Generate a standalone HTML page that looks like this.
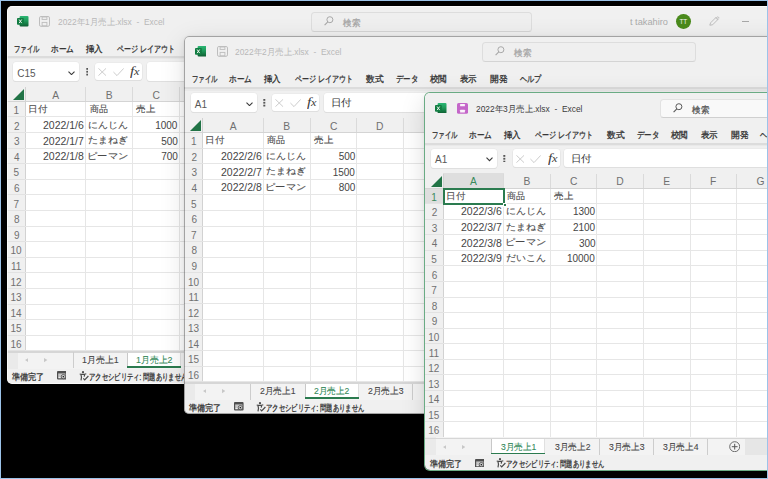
<!DOCTYPE html>
<html><head><meta charset="utf-8"><style>
*{margin:0;padding:0}
html,body{width:768px;height:479px;overflow:hidden;background:#000;font-family:"Liberation Sans",sans-serif}
.frame{position:absolute;left:0;top:0;width:768px;height:479px;overflow:hidden;background:#000}
.fb{position:absolute;left:0;top:0;width:768px;height:479px;box-shadow:inset 0 0 0 1px #9cc3e9;z-index:10}
.abs{position:absolute}
.t{position:absolute;white-space:nowrap;transform-origin:0 0;line-height:normal}
.win{position:absolute;background:#f0f0f0;border-radius:5px;overflow:hidden}
.win::after{content:"";position:absolute;left:0;top:0;right:0;bottom:0;border-radius:5px;box-shadow:inset 0 0 0 1px rgba(255,255,255,0.7);pointer-events:none}
.win.active::after{box-shadow:none}
.sh.active{box-shadow:0 0 0 1px #6aab84,0 2px 6px rgba(0,0,0,0.08),0 6px 26px rgba(0,0,0,0.14)}
.sh{position:absolute;border-radius:5px;box-shadow:0 0 1px rgba(0,0,0,0.15),0 2px 6px rgba(0,0,0,0.07),0 6px 26px rgba(0,0,0,0.12)}
.win.dark::after{box-shadow:inset 0 0 0 1px rgba(0,0,0,0.32)}
</style></head><body>
<div class="frame">
<div class="sh" style="left:184.3px;top:36.1px;width:830px;height:377.5px"></div>
<div class="win" style="left:6.8px;top:6px;width:830px;height:377.5px">
<svg class="abs" style="left:10.6px;top:10.2px" width="11.5" height="10.5" viewBox="0 0 11.5 10.5">
<defs><linearGradient id="xgw1" x1="0" y1="0" x2="0" y2="1"><stop offset="0" stop-color="#2bb673"/><stop offset="0.45" stop-color="#1e9a5a"/><stop offset="1" stop-color="#0f5e33"/></linearGradient></defs>
<rect x="2.6" y="0" width="8.9" height="10.5" rx="1.1" fill="url(#xgw1)"/>
<rect x="0" y="1.9" width="6.8" height="6.8" rx="0.9" fill="#107c41"/>
<path d="M2.1 3.5 L4.7 7.1 M4.7 3.5 L2.1 7.1" stroke="#e8f5ec" stroke-width="1"/>
</svg>
<svg class="abs" style="left:32.5px;top:10.3px" width="11" height="11" viewBox="0 0 11 11">
<rect x="0.5" y="0.5" width="10" height="9.8" rx="1.4" fill="none" stroke="#bdbdbd" stroke-width="1"/>
<rect x="3.1" y="1" width="4.8" height="2.4" fill="none" stroke="#bdbdbd" stroke-width="0.9"/>
<rect x="3.1" y="6.4" width="4.8" height="3.4" fill="none" stroke="#bdbdbd" stroke-width="0.9"/>
</svg>
<div class="t" style="left:51.1px;top:10.3px;color:#b8b8b8;font-size:9px;transform:scaleX(0.9333)">2022年1月売上.xlsx&nbsp;&nbsp;-&nbsp;&nbsp;Excel</div>
<div class="abs" style="left:304.1px;top:6.1px;width:220.7px;height:19.8px;background:#efefef;border:1px solid #dddddd;border-bottom-color:#d4d4d4;border-radius:3.5px;box-sizing:border-box"></div>
<svg class="abs" style="left:317.4px;top:10.3px" width="10" height="10" viewBox="0 0 10 10"><circle cx="5.9" cy="3.7" r="3" fill="none" stroke="#a8a8a8" stroke-width="1"/><path d="M3.8 5.8 L0.6 9.2" stroke="#a8a8a8" stroke-width="1.1"/></svg>
<div class="t" style="left:336.4px;top:11.1px;color:#a8a8a8;font-size:9px;-webkit-text-stroke-width:0.3px;transform:scaleX(0.9500)">検索</div>
<div class="t" style="left:623.2px;top:10px;color:#ababab;font-size:9.5px;transform:scaleX(0.9692)">t takahiro</div>
<div class="abs" style="left:669.2px;top:8.1px;width:14.8px;height:14.8px;border-radius:50%;background:#4a8a1c"></div>
<div class="t" style="left:672.6px;top:11.6px;color:#f4f4f4;font-size:6.5px">TT</div>
<svg class="abs" style="left:702.2px;top:9.6px" width="11" height="10" viewBox="0 0 11 10"><path d="M0.8 9.2 L1.6 6.8 L7.4 1 L9.4 3 L3.6 8.8 Z M6.6 1.8 L8.6 3.8 M8.6 0.4 L10.4 2.2" fill="none" stroke="#b8b8b8" stroke-width="0.9"/></svg>
<div class="abs" style="left:735.5px;top:15px;width:6.4px;height:1px;background:#a8a8a8"></div>
<div class="t" style="left:7.29px;top:36.8px;color:#333;font-size:9px;-webkit-text-stroke-width:0.3px;transform:scaleX(0.7143)">ファイル</div>
<div class="t" style="left:44.5px;top:36.8px;color:#333;font-size:9px;-webkit-text-stroke-width:0.3px;transform:scaleX(0.8462)">ホーム</div>
<div class="t" style="left:79.5px;top:36.8px;color:#333;font-size:9px;-webkit-text-stroke-width:0.3px;transform:scaleX(0.9444)">挿入</div>
<div class="t" style="left:110.3px;top:36.8px;color:#333;font-size:9px;-webkit-text-stroke-width:0.3px;transform:scaleX(0.7795)">ページ&nbsp;レイアウト</div>
<div class="t" style="left:182px;top:36.8px;color:#333;font-size:9px;-webkit-text-stroke-width:0.3px;transform:scaleX(0.9722)">数式</div>
<div class="t" style="left:212px;top:36.8px;color:#333;font-size:9px;-webkit-text-stroke-width:0.3px;transform:scaleX(0.8269)">データ</div>
<div class="t" style="left:246px;top:36.8px;color:#333;font-size:9px;-webkit-text-stroke-width:0.3px;transform:scaleX(0.9444)">校閲</div>
<div class="t" style="left:276px;top:36.8px;color:#333;font-size:9px;-webkit-text-stroke-width:0.3px;transform:scaleX(0.9444)">表示</div>
<div class="t" style="left:306px;top:36.8px;color:#333;font-size:9px;-webkit-text-stroke-width:0.3px;transform:scaleX(0.9722)">開発</div>
<div class="t" style="left:335.5px;top:36.8px;color:#333;font-size:9px;-webkit-text-stroke-width:0.3px;transform:scaleX(0.8000)">ヘルプ</div>
<div class="abs" style="left:0;top:0px;width:830px;height:377.5px">
<div class="abs" style="left:0px;top:50.2px;width:830px;height:2px;background:#dcdcdc"></div>
<div class="abs" style="left:0px;top:52.2px;width:830px;height:1.3px;background:#e9e9e9"></div>
<div class="abs" style="left:6.5px;top:56.4px;width:66px;height:18.8px;background:#fff;border-radius:3px;box-shadow:0 0 0 0.5px #e6e6e6,0 0.8px 0 0.3px #d8d8d8"></div>
<div class="t" style="left:10.5px;top:61.9px;color:#585858;font-size:10px">C15</div>
<svg class="abs" style="left:61.6px;top:64.6px" width="7" height="4.5" viewBox="0 0 7 4.5"><path d="M0.5 0.6 L3.5 3.6 L6.5 0.6" fill="none" stroke="#3a3a3a" stroke-width="1.1"/></svg>
<svg class="abs" style="left:78.8px;top:62.3px" width="2.6" height="7.5" viewBox="0 0 2.6 7.5"><rect x="0.3" y="0" width="2" height="1.8" fill="#555"/><rect x="0.3" y="2.85" width="2" height="1.8" fill="#555"/><rect x="0.3" y="5.7" width="2" height="1.8" fill="#555"/></svg>
<div class="abs" style="left:88px;top:56.9px;width:47.2px;height:17.5px;background:#fff;border-radius:3px;box-shadow:0 0 0 0.5px #e6e6e6,0 0.8px 0 0.3px #d8d8d8"></div>
<svg class="abs" style="left:91.1px;top:62.2px" width="8.5" height="8" viewBox="0 0 8.5 8"><path d="M0.4 0.3 L8.1 7.7 M8.1 0.3 L0.4 7.7" stroke="#c6c6c6" stroke-width="0.9"/></svg>
<svg class="abs" style="left:105.8px;top:62.2px" width="11" height="8" viewBox="0 0 11 8"><path d="M0.4 4 L4 7.6 L10.7 0.4" fill="none" stroke="#c6c6c6" stroke-width="0.9"/></svg>
<div class="t" style="left:123px;top:58.4px;color:#3a3a3a;font-family:'Liberation Serif',serif;font-style:italic;font-size:12.5px;letter-spacing:-0.3px;transform:scaleX(1.2250)">f<span style="font-size:10px">x</span></div>
<div class="abs" style="left:139.9px;top:56.2px;width:700.1px;height:18.7px;background:#fff;border-radius:3px;box-shadow:0 0 0 0.5px #e6e6e6,0 0.8px 0 0.3px #d8d8d8"></div>
<div class="abs" style="left:0px;top:80.4px;width:830px;height:15.1px;background:#f0f0f0"></div>
<div class="abs" style="left:0px;top:95.5px;width:18.6px;height:249.44px;background:#f0f0f0"></div>
<div class="abs" style="left:18.6px;top:95.5px;width:811.4px;height:249.44px;background:#fff"></div>
<svg class="abs" style="left:6px;top:83.4px" width="11.1" height="11" viewBox="0 0 11.1 11"><path d="M11.1 0 L11.1 11 L0 11 Z" fill="#217346"/></svg>
<div class="abs" style="left:78.7px;top:81.4px;width:1px;height:14.1px;background:#dadada"></div>
<div class="abs" style="left:78.7px;top:95.5px;width:1px;height:249.44px;background:#e6e6e6"></div>
<div class="t" style="left:45.4px;top:83.6px;color:#707070;font-size:10.3px">A</div>
<div class="abs" style="left:125.3px;top:81.4px;width:1px;height:14.1px;background:#dadada"></div>
<div class="abs" style="left:125.3px;top:95.5px;width:1px;height:249.44px;background:#e6e6e6"></div>
<div class="t" style="left:99px;top:83.6px;color:#707070;font-size:10.3px">B</div>
<div class="abs" style="left:171.9px;top:81.4px;width:1px;height:14.1px;background:#dadada"></div>
<div class="abs" style="left:171.9px;top:95.5px;width:1px;height:249.44px;background:#e6e6e6"></div>
<div class="t" style="left:145.6px;top:83.6px;color:#707070;font-size:10.3px">C</div>
<div class="abs" style="left:218.5px;top:81.4px;width:1px;height:14.1px;background:#dadada"></div>
<div class="abs" style="left:218.5px;top:95.5px;width:1px;height:249.44px;background:#e6e6e6"></div>
<div class="t" style="left:191.7px;top:83.6px;color:#707070;font-size:10.3px">D</div>
<div class="abs" style="left:265.1px;top:81.4px;width:1px;height:14.1px;background:#dadada"></div>
<div class="abs" style="left:265.1px;top:95.5px;width:1px;height:249.44px;background:#e6e6e6"></div>
<div class="t" style="left:238.8px;top:83.6px;color:#707070;font-size:10.3px">E</div>
<div class="abs" style="left:311.7px;top:81.4px;width:1px;height:14.1px;background:#dadada"></div>
<div class="abs" style="left:311.7px;top:95.5px;width:1px;height:249.44px;background:#e6e6e6"></div>
<div class="t" style="left:285.4px;top:83.6px;color:#707070;font-size:10.3px">F</div>
<div class="abs" style="left:358.3px;top:81.4px;width:1px;height:14.1px;background:#dadada"></div>
<div class="abs" style="left:358.3px;top:95.5px;width:1px;height:249.44px;background:#e6e6e6"></div>
<div class="t" style="left:332px;top:83.6px;color:#707070;font-size:10.3px">G</div>
<div class="abs" style="left:404.9px;top:81.4px;width:1px;height:14.1px;background:#dadada"></div>
<div class="abs" style="left:404.9px;top:95.5px;width:1px;height:249.44px;background:#e6e6e6"></div>
<div class="t" style="left:378.1px;top:83.6px;color:#707070;font-size:10.3px">H</div>
<div class="abs" style="left:451.5px;top:81.4px;width:1px;height:14.1px;background:#dadada"></div>
<div class="abs" style="left:451.5px;top:95.5px;width:1px;height:249.44px;background:#e6e6e6"></div>
<div class="t" style="left:427.2px;top:83.6px;color:#707070;font-size:10.3px">I</div>
<div class="abs" style="left:498.1px;top:81.4px;width:1px;height:14.1px;background:#dadada"></div>
<div class="abs" style="left:498.1px;top:95.5px;width:1px;height:249.44px;background:#e6e6e6"></div>
<div class="t" style="left:472.8px;top:83.6px;color:#707070;font-size:10.3px">J</div>
<div class="abs" style="left:544.7px;top:81.4px;width:1px;height:14.1px;background:#dadada"></div>
<div class="abs" style="left:544.7px;top:95.5px;width:1px;height:249.44px;background:#e6e6e6"></div>
<div class="t" style="left:517.9px;top:83.6px;color:#707070;font-size:10.3px">K</div>
<div class="abs" style="left:591.3px;top:81.4px;width:1px;height:14.1px;background:#dadada"></div>
<div class="abs" style="left:591.3px;top:95.5px;width:1px;height:249.44px;background:#e6e6e6"></div>
<div class="t" style="left:565.5px;top:83.6px;color:#707070;font-size:10.3px">L</div>
<div class="abs" style="left:637.9px;top:81.4px;width:1px;height:14.1px;background:#dadada"></div>
<div class="abs" style="left:637.9px;top:95.5px;width:1px;height:249.44px;background:#e6e6e6"></div>
<div class="t" style="left:610.6px;top:83.6px;color:#707070;font-size:10.3px">M</div>
<div class="abs" style="left:684.5px;top:81.4px;width:1px;height:14.1px;background:#dadada"></div>
<div class="abs" style="left:684.5px;top:95.5px;width:1px;height:249.44px;background:#e6e6e6"></div>
<div class="t" style="left:657.7px;top:83.6px;color:#707070;font-size:10.3px">N</div>
<div class="abs" style="left:731.1px;top:81.4px;width:1px;height:14.1px;background:#dadada"></div>
<div class="abs" style="left:731.1px;top:95.5px;width:1px;height:249.44px;background:#e6e6e6"></div>
<div class="t" style="left:704.3px;top:83.6px;color:#707070;font-size:10.3px">O</div>
<div class="abs" style="left:777.7px;top:81.4px;width:1px;height:14.1px;background:#dadada"></div>
<div class="abs" style="left:777.7px;top:95.5px;width:1px;height:249.44px;background:#e6e6e6"></div>
<div class="t" style="left:750.9px;top:83.6px;color:#707070;font-size:10.3px">P</div>
<div class="abs" style="left:824.3px;top:81.4px;width:1px;height:14.1px;background:#dadada"></div>
<div class="abs" style="left:824.3px;top:95.5px;width:1px;height:249.44px;background:#e6e6e6"></div>
<div class="t" style="left:797.5px;top:83.6px;color:#707070;font-size:10.3px">Q</div>
<div class="abs" style="left:870.9px;top:81.4px;width:1px;height:14.1px;background:#dadada"></div>
<div class="abs" style="left:870.9px;top:95.5px;width:1px;height:249.44px;background:#e6e6e6"></div>
<div class="t" style="left:844.1px;top:83.6px;color:#707070;font-size:10.3px">R</div>
<div class="abs" style="left:18.1px;top:81.4px;width:1px;height:263.54px;background:#d2d2d2"></div>
<div class="abs" style="left:0px;top:95.1px;width:830px;height:1.2px;background:#d4d4d4"></div>
<div class="abs" style="left:18.6px;top:110.49px;width:811.4px;height:1px;background:#e6e6e6"></div>
<div class="abs" style="left:0px;top:110.49px;width:18.6px;height:1px;background:#e2e2e2"></div>
<div class="t" style="left:6.7px;top:99.1px;color:#707070;font-size:10px">1</div>
<div class="abs" style="left:18.6px;top:126.08px;width:811.4px;height:1px;background:#e6e6e6"></div>
<div class="abs" style="left:0px;top:126.08px;width:18.6px;height:1px;background:#e2e2e2"></div>
<div class="t" style="left:7.2px;top:114.69px;color:#707070;font-size:10px">2</div>
<div class="abs" style="left:18.6px;top:141.67px;width:811.4px;height:1px;background:#e6e6e6"></div>
<div class="abs" style="left:0px;top:141.67px;width:18.6px;height:1px;background:#e2e2e2"></div>
<div class="t" style="left:7.2px;top:130.28px;color:#707070;font-size:10px">3</div>
<div class="abs" style="left:18.6px;top:157.26px;width:811.4px;height:1px;background:#e6e6e6"></div>
<div class="abs" style="left:0px;top:157.26px;width:18.6px;height:1px;background:#e2e2e2"></div>
<div class="t" style="left:7.2px;top:145.87px;color:#707070;font-size:10px">4</div>
<div class="abs" style="left:18.6px;top:172.85px;width:811.4px;height:1px;background:#e6e6e6"></div>
<div class="abs" style="left:0px;top:172.85px;width:18.6px;height:1px;background:#e2e2e2"></div>
<div class="t" style="left:6.7px;top:161.46px;color:#707070;font-size:10px">5</div>
<div class="abs" style="left:18.6px;top:188.44px;width:811.4px;height:1px;background:#e6e6e6"></div>
<div class="abs" style="left:0px;top:188.44px;width:18.6px;height:1px;background:#e2e2e2"></div>
<div class="t" style="left:7.2px;top:177.05px;color:#707070;font-size:10px">6</div>
<div class="abs" style="left:18.6px;top:204.03px;width:811.4px;height:1px;background:#e6e6e6"></div>
<div class="abs" style="left:0px;top:204.03px;width:18.6px;height:1px;background:#e2e2e2"></div>
<div class="t" style="left:6.7px;top:192.64px;color:#707070;font-size:10px">7</div>
<div class="abs" style="left:18.6px;top:219.62px;width:811.4px;height:1px;background:#e6e6e6"></div>
<div class="abs" style="left:0px;top:219.62px;width:18.6px;height:1px;background:#e2e2e2"></div>
<div class="t" style="left:7.2px;top:208.23px;color:#707070;font-size:10px">8</div>
<div class="abs" style="left:18.6px;top:235.21px;width:811.4px;height:1px;background:#e6e6e6"></div>
<div class="abs" style="left:0px;top:235.21px;width:18.6px;height:1px;background:#e2e2e2"></div>
<div class="t" style="left:7.2px;top:223.82px;color:#707070;font-size:10px">9</div>
<div class="abs" style="left:18.6px;top:250.8px;width:811.4px;height:1px;background:#e6e6e6"></div>
<div class="abs" style="left:0px;top:250.8px;width:18.6px;height:1px;background:#e2e2e2"></div>
<div class="t" style="left:3.7px;top:239.41px;color:#707070;font-size:10px">10</div>
<div class="abs" style="left:18.6px;top:266.39px;width:811.4px;height:1px;background:#e6e6e6"></div>
<div class="abs" style="left:0px;top:266.39px;width:18.6px;height:1px;background:#e2e2e2"></div>
<div class="t" style="left:4.2px;top:255px;color:#707070;font-size:10px">11</div>
<div class="abs" style="left:18.6px;top:281.98px;width:811.4px;height:1px;background:#e6e6e6"></div>
<div class="abs" style="left:0px;top:281.98px;width:18.6px;height:1px;background:#e2e2e2"></div>
<div class="t" style="left:3.7px;top:270.59px;color:#707070;font-size:10px">12</div>
<div class="abs" style="left:18.6px;top:297.57px;width:811.4px;height:1px;background:#e6e6e6"></div>
<div class="abs" style="left:0px;top:297.57px;width:18.6px;height:1px;background:#e2e2e2"></div>
<div class="t" style="left:3.7px;top:286.18px;color:#707070;font-size:10px">13</div>
<div class="abs" style="left:18.6px;top:313.16px;width:811.4px;height:1px;background:#e6e6e6"></div>
<div class="abs" style="left:0px;top:313.16px;width:18.6px;height:1px;background:#e2e2e2"></div>
<div class="t" style="left:3.7px;top:301.77px;color:#707070;font-size:10px">14</div>
<div class="abs" style="left:18.6px;top:328.75px;width:811.4px;height:1px;background:#e6e6e6"></div>
<div class="abs" style="left:0px;top:328.75px;width:18.6px;height:1px;background:#e2e2e2"></div>
<div class="t" style="left:3.7px;top:317.36px;color:#707070;font-size:10px">15</div>
<div class="abs" style="left:18.6px;top:344.34px;width:811.4px;height:1px;background:#e6e6e6"></div>
<div class="abs" style="left:0px;top:344.34px;width:18.6px;height:1px;background:#e2e2e2"></div>
<div class="t" style="left:3.7px;top:332.95px;color:#707070;font-size:10px">16</div>
<div class="t" style="left:21.14px;top:97.1px;color:#4a4a4a;font-size:9px;-webkit-text-stroke-width:0.1px;transform:scaleX(1.0588)">日付</div>
<div class="t" style="left:82.8px;top:97.1px;color:#4a4a4a;font-size:9px;-webkit-text-stroke-width:0.1px">商品</div>
<div class="t" style="left:129.4px;top:97.1px;color:#4a4a4a;font-size:9px;-webkit-text-stroke-width:0.1px;transform:scaleX(1.0588)">売上</div>
<div class="t" style="left:36.25px;top:113.99px;color:#454545;font-size:10px;transform:scaleX(1.0500)">2022/1/6</div>
<div class="t" style="left:81.69px;top:112.69px;color:#4a4a4a;font-size:9px;-webkit-text-stroke-width:0.1px;transform:scaleX(1.1059)">にんじん</div>
<div class="t" style="left:148.4px;top:113.99px;color:#454545;font-size:10px">1000</div>
<div class="t" style="left:36.25px;top:129.58px;color:#454545;font-size:10px;transform:scaleX(1.0500)">2022/1/7</div>
<div class="t" style="left:81.69px;top:128.28px;color:#4a4a4a;font-size:9px;-webkit-text-stroke-width:0.1px;transform:scaleX(1.1059)">たまねぎ</div>
<div class="t" style="left:154.4px;top:129.58px;color:#454545;font-size:10px">500</div>
<div class="t" style="left:36.25px;top:145.17px;color:#454545;font-size:10px;transform:scaleX(1.0500)">2022/1/8</div>
<div class="t" style="left:80.52px;top:143.87px;color:#4a4a4a;font-size:9px;-webkit-text-stroke-width:0.1px;transform:scaleX(1.1394)">ピーマン</div>
<div class="t" style="left:154.4px;top:145.17px;color:#454545;font-size:10px">700</div>
<div class="abs" style="left:0px;top:344.94px;width:830px;height:18.06px;background:#f3f3f3"></div>
<div class="abs" style="left:0px;top:344.94px;width:11px;height:18.06px;background:#eaeaea"></div>
<div class="abs" style="left:0px;top:345.14px;width:830px;height:1.4px;background:#d6d6d6"></div>
<svg class="abs" style="left:18.3px;top:352.4px" width="3.4" height="4.2" viewBox="0 0 3.4 4.2"><path d="M3.4 0 L0 2.1 L3.4 4.2 Z" fill="#c8c8c8"/></svg>
<svg class="abs" style="left:37.5px;top:352.4px" width="3.4" height="4.2" viewBox="0 0 3.4 4.2"><path d="M0 0 L3.4 2.1 L0 4.2 Z" fill="#c8c8c8"/></svg>
<div class="t" style="left:75.11px;top:348.3px;color:#464646;font-size:9px;-webkit-text-stroke-width:0.1px;transform:scaleX(0.9889)">1月売上1</div>
<div class="abs" style="left:120.6px;top:346.54px;width:54px;height:15.26px;background:#fff;border-left:1px solid #c8c8c8;border-right:1px solid #e0e0e0;box-sizing:border-box"></div>
<div class="abs" style="left:120.6px;top:360.2px;width:54px;height:1.6px;background:#2b7b4f"></div>
<div class="t" style="left:129.22px;top:348.3px;color:#358a5a;font-size:9px;-webkit-text-stroke-width:0.1px;transform:scaleX(0.9833)">1月売上2</div>
<div class="abs" style="left:66.1px;top:346.44px;width:1px;height:16.06px;background:#cdcdcd"></div>
<div class="t" style="left:5.2px;top:365.6px;color:#333;font-size:8.5px;-webkit-text-stroke-width:0.3px;transform:scaleX(0.8943)">準備完了</div>
<svg class="abs" style="left:50.1px;top:365.3px" width="9.6" height="8.6" viewBox="0 0 9.6 8.6"><rect x="0.6" y="0.6" width="8.4" height="7.3" rx="0.5" fill="#c4c4c4" stroke="#4f4f4f" stroke-width="1.2"/><rect x="0.6" y="0.6" width="8.4" height="1.8" fill="#4f4f4f"/><circle cx="6.4" cy="5.6" r="2.1" fill="#e8e8e8" stroke="#4f4f4f" stroke-width="0.9"/><circle cx="6.4" cy="5.6" r="0.9" fill="#222"/><path d="M1.6 6.6 H3.4" stroke="#f4f4f4" stroke-width="0.9"/></svg>
<svg class="abs" style="left:71.8px;top:364.6px" width="10" height="10" viewBox="0 0 10 10"><circle cx="4.0" cy="1.2" r="1.1" fill="#4a4a4a"/><path d="M0.7 3.0 Q4 3.9 7.3 2.8 M1.9 3.4 L2.5 6.2 L2.0 9.4 M5.7 3.4 L5.2 5.6" fill="none" stroke="#4a4a4a" stroke-width="1.2"/><path d="M4.3 7.3 L5.7 8.9 L9.4 5.0" fill="none" stroke="#4a4a4a" stroke-width="1.2"/></svg>
<div class="t" style="left:81.8px;top:365.6px;color:#333;font-size:8.5px;-webkit-text-stroke-width:0.3px;transform:scaleX(0.7029)">アクセシビリティ:&nbsp;問題ありません</div>
</div>
</div>
<div class="sh" style="left:184.3px;top:36.1px;width:810px;height:377.5px"></div>
<div class="win dark" style="left:184.3px;top:36.1px;width:810px;height:377.5px">
<svg class="abs" style="left:10.6px;top:10.2px" width="11.5" height="10.5" viewBox="0 0 11.5 10.5">
<defs><linearGradient id="xgw2" x1="0" y1="0" x2="0" y2="1"><stop offset="0" stop-color="#2bb673"/><stop offset="0.45" stop-color="#1e9a5a"/><stop offset="1" stop-color="#0f5e33"/></linearGradient></defs>
<rect x="2.6" y="0" width="8.9" height="10.5" rx="1.1" fill="url(#xgw2)"/>
<rect x="0" y="1.9" width="6.8" height="6.8" rx="0.9" fill="#107c41"/>
<path d="M2.1 3.5 L4.7 7.1 M4.7 3.5 L2.1 7.1" stroke="#e8f5ec" stroke-width="1"/>
</svg>
<svg class="abs" style="left:32.5px;top:10.3px" width="11" height="11" viewBox="0 0 11 11">
<rect x="0.5" y="0.5" width="10" height="9.8" rx="1.4" fill="none" stroke="#bdbdbd" stroke-width="1"/>
<rect x="3.1" y="1" width="4.8" height="2.4" fill="none" stroke="#bdbdbd" stroke-width="0.9"/>
<rect x="3.1" y="6.4" width="4.8" height="3.4" fill="none" stroke="#bdbdbd" stroke-width="0.9"/>
</svg>
<div class="t" style="left:51.1px;top:10.3px;color:#b8b8b8;font-size:9px;transform:scaleX(0.9333)">2022年2月売上.xlsx&nbsp;&nbsp;-&nbsp;&nbsp;Excel</div>
<div class="abs" style="left:297.3px;top:6.1px;width:214.7px;height:19.8px;background:#efefef;border:1px solid #dddddd;border-bottom-color:#d4d4d4;border-radius:3.5px;box-sizing:border-box"></div>
<svg class="abs" style="left:310.6px;top:10.3px" width="10" height="10" viewBox="0 0 10 10"><circle cx="5.9" cy="3.7" r="3" fill="none" stroke="#a8a8a8" stroke-width="1"/><path d="M3.8 5.8 L0.6 9.2" stroke="#a8a8a8" stroke-width="1.1"/></svg>
<div class="t" style="left:329.6px;top:11.1px;color:#a8a8a8;font-size:9px;-webkit-text-stroke-width:0.3px;transform:scaleX(0.9500)">検索</div>

<div class="t" style="left:7.29px;top:36.8px;color:#333;font-size:9px;-webkit-text-stroke-width:0.3px;transform:scaleX(0.7143)">ファイル</div>
<div class="t" style="left:44.5px;top:36.8px;color:#333;font-size:9px;-webkit-text-stroke-width:0.3px;transform:scaleX(0.8462)">ホーム</div>
<div class="t" style="left:79.5px;top:36.8px;color:#333;font-size:9px;-webkit-text-stroke-width:0.3px;transform:scaleX(0.9444)">挿入</div>
<div class="t" style="left:110.3px;top:36.8px;color:#333;font-size:9px;-webkit-text-stroke-width:0.3px;transform:scaleX(0.7795)">ページ&nbsp;レイアウト</div>
<div class="t" style="left:182px;top:36.8px;color:#333;font-size:9px;-webkit-text-stroke-width:0.3px;transform:scaleX(0.9722)">数式</div>
<div class="t" style="left:212px;top:36.8px;color:#333;font-size:9px;-webkit-text-stroke-width:0.3px;transform:scaleX(0.8269)">データ</div>
<div class="t" style="left:246px;top:36.8px;color:#333;font-size:9px;-webkit-text-stroke-width:0.3px;transform:scaleX(0.9444)">校閲</div>
<div class="t" style="left:276px;top:36.8px;color:#333;font-size:9px;-webkit-text-stroke-width:0.3px;transform:scaleX(0.9444)">表示</div>
<div class="t" style="left:306px;top:36.8px;color:#333;font-size:9px;-webkit-text-stroke-width:0.3px;transform:scaleX(0.9722)">開発</div>
<div class="t" style="left:335.5px;top:36.8px;color:#333;font-size:9px;-webkit-text-stroke-width:0.3px;transform:scaleX(0.8000)">ヘルプ</div>
<div class="abs" style="left:0;top:1px;width:810px;height:377.5px">
<div class="abs" style="left:0px;top:50.2px;width:810px;height:2px;background:#dcdcdc"></div>
<div class="abs" style="left:0px;top:52.2px;width:810px;height:1.3px;background:#e9e9e9"></div>
<div class="abs" style="left:6.5px;top:56.4px;width:66px;height:18.8px;background:#fff;border-radius:3px;box-shadow:0 0 0 0.5px #e6e6e6,0 0.8px 0 0.3px #d8d8d8"></div>
<div class="t" style="left:10.5px;top:61.9px;color:#585858;font-size:10px">A1</div>
<svg class="abs" style="left:61.6px;top:64.6px" width="7" height="4.5" viewBox="0 0 7 4.5"><path d="M0.5 0.6 L3.5 3.6 L6.5 0.6" fill="none" stroke="#3a3a3a" stroke-width="1.1"/></svg>
<svg class="abs" style="left:78.8px;top:62.3px" width="2.6" height="7.5" viewBox="0 0 2.6 7.5"><rect x="0.3" y="0" width="2" height="1.8" fill="#555"/><rect x="0.3" y="2.85" width="2" height="1.8" fill="#555"/><rect x="0.3" y="5.7" width="2" height="1.8" fill="#555"/></svg>
<div class="abs" style="left:88px;top:56.9px;width:47.2px;height:17.5px;background:#fff;border-radius:3px;box-shadow:0 0 0 0.5px #e6e6e6,0 0.8px 0 0.3px #d8d8d8"></div>
<svg class="abs" style="left:91.1px;top:62.2px" width="8.5" height="8" viewBox="0 0 8.5 8"><path d="M0.4 0.3 L8.1 7.7 M8.1 0.3 L0.4 7.7" stroke="#c6c6c6" stroke-width="0.9"/></svg>
<svg class="abs" style="left:105.8px;top:62.2px" width="11" height="8" viewBox="0 0 11 8"><path d="M0.4 4 L4 7.6 L10.7 0.4" fill="none" stroke="#c6c6c6" stroke-width="0.9"/></svg>
<div class="t" style="left:123px;top:58.4px;color:#3a3a3a;font-family:'Liberation Serif',serif;font-style:italic;font-size:12.5px;letter-spacing:-0.3px;transform:scaleX(1.2250)">f<span style="font-size:10px">x</span></div>
<div class="abs" style="left:139.9px;top:56.2px;width:680.1px;height:18.7px;background:#fff;border-radius:3px;box-shadow:0 0 0 0.5px #e6e6e6,0 0.8px 0 0.3px #d8d8d8"></div>
<div class="t" style="left:146.81px;top:60.1px;color:#333;font-size:9.6px;transform:scaleX(1.0471)">日付</div>
<div class="abs" style="left:0px;top:80.4px;width:810px;height:15.1px;background:#f0f0f0"></div>
<div class="abs" style="left:0px;top:95.5px;width:18.6px;height:249.44px;background:#f0f0f0"></div>
<div class="abs" style="left:18.6px;top:95.5px;width:791.4px;height:249.44px;background:#fff"></div>
<svg class="abs" style="left:6px;top:83.4px" width="11.1" height="11" viewBox="0 0 11.1 11"><path d="M11.1 0 L11.1 11 L0 11 Z" fill="#217346"/></svg>
<div class="abs" style="left:78.7px;top:81.4px;width:1px;height:14.1px;background:#dadada"></div>
<div class="abs" style="left:78.7px;top:95.5px;width:1px;height:249.44px;background:#e6e6e6"></div>
<div class="t" style="left:45.4px;top:83.6px;color:#707070;font-size:10.3px">A</div>
<div class="abs" style="left:125.3px;top:81.4px;width:1px;height:14.1px;background:#dadada"></div>
<div class="abs" style="left:125.3px;top:95.5px;width:1px;height:249.44px;background:#e6e6e6"></div>
<div class="t" style="left:99px;top:83.6px;color:#707070;font-size:10.3px">B</div>
<div class="abs" style="left:171.9px;top:81.4px;width:1px;height:14.1px;background:#dadada"></div>
<div class="abs" style="left:171.9px;top:95.5px;width:1px;height:249.44px;background:#e6e6e6"></div>
<div class="t" style="left:145.6px;top:83.6px;color:#707070;font-size:10.3px">C</div>
<div class="abs" style="left:218.5px;top:81.4px;width:1px;height:14.1px;background:#dadada"></div>
<div class="abs" style="left:218.5px;top:95.5px;width:1px;height:249.44px;background:#e6e6e6"></div>
<div class="t" style="left:191.7px;top:83.6px;color:#707070;font-size:10.3px">D</div>
<div class="abs" style="left:265.1px;top:81.4px;width:1px;height:14.1px;background:#dadada"></div>
<div class="abs" style="left:265.1px;top:95.5px;width:1px;height:249.44px;background:#e6e6e6"></div>
<div class="abs" style="left:311.7px;top:81.4px;width:1px;height:14.1px;background:#dadada"></div>
<div class="abs" style="left:311.7px;top:95.5px;width:1px;height:249.44px;background:#e6e6e6"></div>
<div class="abs" style="left:358.3px;top:81.4px;width:1px;height:14.1px;background:#dadada"></div>
<div class="abs" style="left:358.3px;top:95.5px;width:1px;height:249.44px;background:#e6e6e6"></div>
<div class="abs" style="left:404.9px;top:81.4px;width:1px;height:14.1px;background:#dadada"></div>
<div class="abs" style="left:404.9px;top:95.5px;width:1px;height:249.44px;background:#e6e6e6"></div>
<div class="abs" style="left:451.5px;top:81.4px;width:1px;height:14.1px;background:#dadada"></div>
<div class="abs" style="left:451.5px;top:95.5px;width:1px;height:249.44px;background:#e6e6e6"></div>
<div class="abs" style="left:498.1px;top:81.4px;width:1px;height:14.1px;background:#dadada"></div>
<div class="abs" style="left:498.1px;top:95.5px;width:1px;height:249.44px;background:#e6e6e6"></div>
<div class="abs" style="left:544.7px;top:81.4px;width:1px;height:14.1px;background:#dadada"></div>
<div class="abs" style="left:544.7px;top:95.5px;width:1px;height:249.44px;background:#e6e6e6"></div>
<div class="abs" style="left:591.3px;top:81.4px;width:1px;height:14.1px;background:#dadada"></div>
<div class="abs" style="left:591.3px;top:95.5px;width:1px;height:249.44px;background:#e6e6e6"></div>
<div class="abs" style="left:637.9px;top:81.4px;width:1px;height:14.1px;background:#dadada"></div>
<div class="abs" style="left:637.9px;top:95.5px;width:1px;height:249.44px;background:#e6e6e6"></div>
<div class="abs" style="left:684.5px;top:81.4px;width:1px;height:14.1px;background:#dadada"></div>
<div class="abs" style="left:684.5px;top:95.5px;width:1px;height:249.44px;background:#e6e6e6"></div>
<div class="abs" style="left:731.1px;top:81.4px;width:1px;height:14.1px;background:#dadada"></div>
<div class="abs" style="left:731.1px;top:95.5px;width:1px;height:249.44px;background:#e6e6e6"></div>
<div class="abs" style="left:777.7px;top:81.4px;width:1px;height:14.1px;background:#dadada"></div>
<div class="abs" style="left:777.7px;top:95.5px;width:1px;height:249.44px;background:#e6e6e6"></div>
<div class="abs" style="left:824.3px;top:81.4px;width:1px;height:14.1px;background:#dadada"></div>
<div class="abs" style="left:824.3px;top:95.5px;width:1px;height:249.44px;background:#e6e6e6"></div>
<div class="abs" style="left:18.1px;top:81.4px;width:1px;height:263.54px;background:#d2d2d2"></div>
<div class="abs" style="left:0px;top:95.1px;width:810px;height:1.2px;background:#d4d4d4"></div>
<div class="abs" style="left:18.6px;top:110.49px;width:791.4px;height:1px;background:#e6e6e6"></div>
<div class="abs" style="left:0px;top:110.49px;width:18.6px;height:1px;background:#e2e2e2"></div>
<div class="t" style="left:6.7px;top:99.1px;color:#707070;font-size:10px">1</div>
<div class="abs" style="left:18.6px;top:126.08px;width:791.4px;height:1px;background:#e6e6e6"></div>
<div class="abs" style="left:0px;top:126.08px;width:18.6px;height:1px;background:#e2e2e2"></div>
<div class="t" style="left:7.2px;top:114.69px;color:#707070;font-size:10px">2</div>
<div class="abs" style="left:18.6px;top:141.67px;width:791.4px;height:1px;background:#e6e6e6"></div>
<div class="abs" style="left:0px;top:141.67px;width:18.6px;height:1px;background:#e2e2e2"></div>
<div class="t" style="left:7.2px;top:130.28px;color:#707070;font-size:10px">3</div>
<div class="abs" style="left:18.6px;top:157.26px;width:791.4px;height:1px;background:#e6e6e6"></div>
<div class="abs" style="left:0px;top:157.26px;width:18.6px;height:1px;background:#e2e2e2"></div>
<div class="t" style="left:7.2px;top:145.87px;color:#707070;font-size:10px">4</div>
<div class="abs" style="left:18.6px;top:172.85px;width:791.4px;height:1px;background:#e6e6e6"></div>
<div class="abs" style="left:0px;top:172.85px;width:18.6px;height:1px;background:#e2e2e2"></div>
<div class="t" style="left:6.7px;top:161.46px;color:#707070;font-size:10px">5</div>
<div class="abs" style="left:18.6px;top:188.44px;width:791.4px;height:1px;background:#e6e6e6"></div>
<div class="abs" style="left:0px;top:188.44px;width:18.6px;height:1px;background:#e2e2e2"></div>
<div class="t" style="left:7.2px;top:177.05px;color:#707070;font-size:10px">6</div>
<div class="abs" style="left:18.6px;top:204.03px;width:791.4px;height:1px;background:#e6e6e6"></div>
<div class="abs" style="left:0px;top:204.03px;width:18.6px;height:1px;background:#e2e2e2"></div>
<div class="t" style="left:6.7px;top:192.64px;color:#707070;font-size:10px">7</div>
<div class="abs" style="left:18.6px;top:219.62px;width:791.4px;height:1px;background:#e6e6e6"></div>
<div class="abs" style="left:0px;top:219.62px;width:18.6px;height:1px;background:#e2e2e2"></div>
<div class="t" style="left:7.2px;top:208.23px;color:#707070;font-size:10px">8</div>
<div class="abs" style="left:18.6px;top:235.21px;width:791.4px;height:1px;background:#e6e6e6"></div>
<div class="abs" style="left:0px;top:235.21px;width:18.6px;height:1px;background:#e2e2e2"></div>
<div class="t" style="left:7.2px;top:223.82px;color:#707070;font-size:10px">9</div>
<div class="abs" style="left:18.6px;top:250.8px;width:791.4px;height:1px;background:#e6e6e6"></div>
<div class="abs" style="left:0px;top:250.8px;width:18.6px;height:1px;background:#e2e2e2"></div>
<div class="t" style="left:3.7px;top:239.41px;color:#707070;font-size:10px">10</div>
<div class="abs" style="left:18.6px;top:266.39px;width:791.4px;height:1px;background:#e6e6e6"></div>
<div class="abs" style="left:0px;top:266.39px;width:18.6px;height:1px;background:#e2e2e2"></div>
<div class="t" style="left:4.2px;top:255px;color:#707070;font-size:10px">11</div>
<div class="abs" style="left:18.6px;top:281.98px;width:791.4px;height:1px;background:#e6e6e6"></div>
<div class="abs" style="left:0px;top:281.98px;width:18.6px;height:1px;background:#e2e2e2"></div>
<div class="t" style="left:3.7px;top:270.59px;color:#707070;font-size:10px">12</div>
<div class="abs" style="left:18.6px;top:297.57px;width:791.4px;height:1px;background:#e6e6e6"></div>
<div class="abs" style="left:0px;top:297.57px;width:18.6px;height:1px;background:#e2e2e2"></div>
<div class="t" style="left:3.7px;top:286.18px;color:#707070;font-size:10px">13</div>
<div class="abs" style="left:18.6px;top:313.16px;width:791.4px;height:1px;background:#e6e6e6"></div>
<div class="abs" style="left:0px;top:313.16px;width:18.6px;height:1px;background:#e2e2e2"></div>
<div class="t" style="left:3.7px;top:301.77px;color:#707070;font-size:10px">14</div>
<div class="abs" style="left:18.6px;top:328.75px;width:791.4px;height:1px;background:#e6e6e6"></div>
<div class="abs" style="left:0px;top:328.75px;width:18.6px;height:1px;background:#e2e2e2"></div>
<div class="t" style="left:3.7px;top:317.36px;color:#707070;font-size:10px">15</div>
<div class="abs" style="left:18.6px;top:344.34px;width:791.4px;height:1px;background:#e6e6e6"></div>
<div class="abs" style="left:0px;top:344.34px;width:18.6px;height:1px;background:#e2e2e2"></div>
<div class="t" style="left:3.7px;top:332.95px;color:#707070;font-size:10px">16</div>
<div class="t" style="left:21.14px;top:97.1px;color:#4a4a4a;font-size:9px;-webkit-text-stroke-width:0.1px;transform:scaleX(1.0588)">日付</div>
<div class="t" style="left:82.8px;top:97.1px;color:#4a4a4a;font-size:9px;-webkit-text-stroke-width:0.1px">商品</div>
<div class="t" style="left:129.4px;top:97.1px;color:#4a4a4a;font-size:9px;-webkit-text-stroke-width:0.1px;transform:scaleX(1.0588)">売上</div>
<div class="t" style="left:36.25px;top:113.99px;color:#454545;font-size:10px;transform:scaleX(1.0500)">2022/2/6</div>
<div class="t" style="left:81.69px;top:112.69px;color:#4a4a4a;font-size:9px;-webkit-text-stroke-width:0.1px;transform:scaleX(1.1059)">にんじん</div>
<div class="t" style="left:154.4px;top:113.99px;color:#454545;font-size:10px">500</div>
<div class="t" style="left:36.25px;top:129.58px;color:#454545;font-size:10px;transform:scaleX(1.0500)">2022/2/7</div>
<div class="t" style="left:81.69px;top:128.28px;color:#4a4a4a;font-size:9px;-webkit-text-stroke-width:0.1px;transform:scaleX(1.1059)">たまねぎ</div>
<div class="t" style="left:148.4px;top:129.58px;color:#454545;font-size:10px">1500</div>
<div class="t" style="left:36.25px;top:145.17px;color:#454545;font-size:10px;transform:scaleX(1.0500)">2022/2/8</div>
<div class="t" style="left:80.52px;top:143.87px;color:#4a4a4a;font-size:9px;-webkit-text-stroke-width:0.1px;transform:scaleX(1.1394)">ピーマン</div>
<div class="t" style="left:154.4px;top:145.17px;color:#454545;font-size:10px">800</div>
<div class="abs" style="left:0px;top:344.94px;width:810px;height:18.06px;background:#f3f3f3"></div>
<div class="abs" style="left:0px;top:344.94px;width:11px;height:18.06px;background:#eaeaea"></div>
<div class="abs" style="left:0px;top:345.14px;width:810px;height:1.4px;background:#d6d6d6"></div>
<svg class="abs" style="left:18.3px;top:352.4px" width="3.4" height="4.2" viewBox="0 0 3.4 4.2"><path d="M3.4 0 L0 2.1 L3.4 4.2 Z" fill="#c8c8c8"/></svg>
<svg class="abs" style="left:37.5px;top:352.4px" width="3.4" height="4.2" viewBox="0 0 3.4 4.2"><path d="M0 0 L3.4 2.1 L0 4.2 Z" fill="#c8c8c8"/></svg>
<div class="t" style="left:76.1px;top:348.3px;color:#464646;font-size:9px;-webkit-text-stroke-width:0.1px;transform:scaleX(0.9622)">2月売上1</div>
<div class="abs" style="left:120.6px;top:346.54px;width:54px;height:15.26px;background:#fff;border-left:1px solid #c8c8c8;border-right:1px solid #e0e0e0;box-sizing:border-box"></div>
<div class="abs" style="left:120.6px;top:360.2px;width:54px;height:1.6px;background:#2b7b4f"></div>
<div class="t" style="left:130.2px;top:348.3px;color:#358a5a;font-size:9px;-webkit-text-stroke-width:0.1px;transform:scaleX(0.9568)">2月売上2</div>
<div class="t" style="left:184.1px;top:348.3px;color:#464646;font-size:9px;-webkit-text-stroke-width:0.1px;transform:scaleX(0.9622)">2月売上3</div>
<div class="abs" style="left:66.1px;top:346.44px;width:1px;height:16.06px;background:#cdcdcd"></div>
<div class="abs" style="left:228.1px;top:346.44px;width:1px;height:16.06px;background:#cdcdcd"></div>
<div class="t" style="left:5.2px;top:365.6px;color:#333;font-size:8.5px;-webkit-text-stroke-width:0.3px;transform:scaleX(0.8943)">準備完了</div>
<svg class="abs" style="left:50.1px;top:365.3px" width="9.6" height="8.6" viewBox="0 0 9.6 8.6"><rect x="0.6" y="0.6" width="8.4" height="7.3" rx="0.5" fill="#c4c4c4" stroke="#4f4f4f" stroke-width="1.2"/><rect x="0.6" y="0.6" width="8.4" height="1.8" fill="#4f4f4f"/><circle cx="6.4" cy="5.6" r="2.1" fill="#e8e8e8" stroke="#4f4f4f" stroke-width="0.9"/><circle cx="6.4" cy="5.6" r="0.9" fill="#222"/><path d="M1.6 6.6 H3.4" stroke="#f4f4f4" stroke-width="0.9"/></svg>
<svg class="abs" style="left:71.8px;top:364.6px" width="10" height="10" viewBox="0 0 10 10"><circle cx="4.0" cy="1.2" r="1.1" fill="#4a4a4a"/><path d="M0.7 3.0 Q4 3.9 7.3 2.8 M1.9 3.4 L2.5 6.2 L2.0 9.4 M5.7 3.4 L5.2 5.6" fill="none" stroke="#4a4a4a" stroke-width="1.2"/><path d="M4.3 7.3 L5.7 8.9 L9.4 5.0" fill="none" stroke="#4a4a4a" stroke-width="1.2"/></svg>
<div class="t" style="left:81.8px;top:365.6px;color:#333;font-size:8.5px;-webkit-text-stroke-width:0.3px;transform:scaleX(0.7029)">アクセシビリティ:&nbsp;問題ありません</div>
</div>
</div>
<div class="sh active" style="left:424.5px;top:92.5px;width:700px;height:377.5px"></div>
<div class="win active" style="left:424.5px;top:92.5px;width:700px;height:377.5px">
<svg class="abs" style="left:10.6px;top:10.2px" width="11.5" height="10.5" viewBox="0 0 11.5 10.5">
<defs><linearGradient id="xgw3" x1="0" y1="0" x2="0" y2="1"><stop offset="0" stop-color="#2bb673"/><stop offset="0.45" stop-color="#1e9a5a"/><stop offset="1" stop-color="#0f5e33"/></linearGradient></defs>
<rect x="2.6" y="0" width="8.9" height="10.5" rx="1.1" fill="url(#xgw3)"/>
<rect x="0" y="1.9" width="6.8" height="6.8" rx="0.9" fill="#107c41"/>
<path d="M2.1 3.5 L4.7 7.1 M4.7 3.5 L2.1 7.1" stroke="#e8f5ec" stroke-width="1"/>
</svg>
<svg class="abs" style="left:32.5px;top:10.3px" width="11" height="11" viewBox="0 0 11 11">
<rect x="0" y="0" width="11" height="10.8" rx="1.6" fill="#c466c9"/>
<rect x="3.1" y="1" width="4.8" height="2.3" rx="0.4" fill="#fbf3fb"/>
<rect x="3.1" y="6.8" width="4.8" height="2.8" rx="0.4" fill="#fbf3fb"/>
</svg>
<div class="t" style="left:51.1px;top:10.3px;color:#3c3c3c;font-size:9px;transform:scaleX(0.9333)">2022年3月売上.xlsx&nbsp;&nbsp;-&nbsp;&nbsp;Excel</div>
<div class="abs" style="left:235.1px;top:6.1px;width:216px;height:19.8px;background:#f9f9f9;border:1px solid #e2e2e2;border-bottom-color:#d0d0d0;border-radius:3.5px;box-sizing:border-box"></div>
<svg class="abs" style="left:248.4px;top:10.3px" width="10" height="10" viewBox="0 0 10 10"><circle cx="5.9" cy="3.7" r="3" fill="none" stroke="#5a5a5a" stroke-width="1"/><path d="M3.8 5.8 L0.6 9.2" stroke="#5a5a5a" stroke-width="1.1"/></svg>
<div class="t" style="left:267.4px;top:11.1px;color:#5a5a5a;font-size:9px;-webkit-text-stroke-width:0.3px;transform:scaleX(0.9500)">検索</div>

<div class="t" style="left:7.29px;top:36.8px;color:#333;font-size:9px;-webkit-text-stroke-width:0.3px;transform:scaleX(0.7143)">ファイル</div>
<div class="t" style="left:44.5px;top:36.8px;color:#333;font-size:9px;-webkit-text-stroke-width:0.3px;transform:scaleX(0.8462)">ホーム</div>
<div class="t" style="left:79.5px;top:36.8px;color:#333;font-size:9px;-webkit-text-stroke-width:0.3px;transform:scaleX(0.9444)">挿入</div>
<div class="t" style="left:110.3px;top:36.8px;color:#333;font-size:9px;-webkit-text-stroke-width:0.3px;transform:scaleX(0.7795)">ページ&nbsp;レイアウト</div>
<div class="t" style="left:182px;top:36.8px;color:#333;font-size:9px;-webkit-text-stroke-width:0.3px;transform:scaleX(0.9722)">数式</div>
<div class="t" style="left:212px;top:36.8px;color:#333;font-size:9px;-webkit-text-stroke-width:0.3px;transform:scaleX(0.8269)">データ</div>
<div class="t" style="left:246px;top:36.8px;color:#333;font-size:9px;-webkit-text-stroke-width:0.3px;transform:scaleX(0.9444)">校閲</div>
<div class="t" style="left:276px;top:36.8px;color:#333;font-size:9px;-webkit-text-stroke-width:0.3px;transform:scaleX(0.9444)">表示</div>
<div class="t" style="left:306px;top:36.8px;color:#333;font-size:9px;-webkit-text-stroke-width:0.3px;transform:scaleX(0.9722)">開発</div>
<div class="t" style="left:335.5px;top:36.8px;color:#333;font-size:9px;-webkit-text-stroke-width:0.3px;transform:scaleX(0.8000)">ヘルプ</div>
<div class="abs" style="left:0;top:0px;width:700px;height:377.5px">
<div class="abs" style="left:0px;top:50.2px;width:700px;height:2px;background:#dcdcdc"></div>
<div class="abs" style="left:0px;top:52.2px;width:700px;height:1.3px;background:#e9e9e9"></div>
<div class="abs" style="left:6.5px;top:56.4px;width:66px;height:18.8px;background:#fff;border-radius:3px;box-shadow:0 0 0 0.5px #e6e6e6,0 0.8px 0 0.3px #d8d8d8"></div>
<div class="t" style="left:10.5px;top:61.9px;color:#585858;font-size:10px">A1</div>
<svg class="abs" style="left:61.6px;top:64.6px" width="7" height="4.5" viewBox="0 0 7 4.5"><path d="M0.5 0.6 L3.5 3.6 L6.5 0.6" fill="none" stroke="#3a3a3a" stroke-width="1.1"/></svg>
<svg class="abs" style="left:78.8px;top:62.3px" width="2.6" height="7.5" viewBox="0 0 2.6 7.5"><rect x="0.3" y="0" width="2" height="1.8" fill="#555"/><rect x="0.3" y="2.85" width="2" height="1.8" fill="#555"/><rect x="0.3" y="5.7" width="2" height="1.8" fill="#555"/></svg>
<div class="abs" style="left:88px;top:56.9px;width:47.2px;height:17.5px;background:#fff;border-radius:3px;box-shadow:0 0 0 0.5px #e6e6e6,0 0.8px 0 0.3px #d8d8d8"></div>
<svg class="abs" style="left:91.1px;top:62.2px" width="8.5" height="8" viewBox="0 0 8.5 8"><path d="M0.4 0.3 L8.1 7.7 M8.1 0.3 L0.4 7.7" stroke="#c6c6c6" stroke-width="0.9"/></svg>
<svg class="abs" style="left:105.8px;top:62.2px" width="11" height="8" viewBox="0 0 11 8"><path d="M0.4 4 L4 7.6 L10.7 0.4" fill="none" stroke="#c6c6c6" stroke-width="0.9"/></svg>
<div class="t" style="left:123px;top:58.4px;color:#3a3a3a;font-family:'Liberation Serif',serif;font-style:italic;font-size:12.5px;letter-spacing:-0.3px;transform:scaleX(1.2250)">f<span style="font-size:10px">x</span></div>
<div class="abs" style="left:139.9px;top:56.2px;width:570.1px;height:18.7px;background:#fff;border-radius:3px;box-shadow:0 0 0 0.5px #e6e6e6,0 0.8px 0 0.3px #d8d8d8"></div>
<div class="t" style="left:146.81px;top:60.1px;color:#333;font-size:9.6px;transform:scaleX(1.0471)">日付</div>
<div class="abs" style="left:0px;top:80.4px;width:700px;height:15.1px;background:#f0f0f0"></div>
<div class="abs" style="left:0px;top:95.5px;width:18.6px;height:249.44px;background:#f0f0f0"></div>
<div class="abs" style="left:18.6px;top:95.5px;width:681.4px;height:249.44px;background:#fff"></div>
<div class="abs" style="left:18.6px;top:80.4px;width:60.6px;height:15.1px;background:#dedede"></div>
<div class="abs" style="left:0px;top:95.5px;width:18.6px;height:15.59px;background:#dedede"></div>
<svg class="abs" style="left:6px;top:83.4px" width="11.1" height="11" viewBox="0 0 11.1 11"><path d="M11.1 0 L11.1 11 L0 11 Z" fill="#217346"/></svg>
<div class="abs" style="left:78.7px;top:81.4px;width:1px;height:14.1px;background:#dadada"></div>
<div class="abs" style="left:78.7px;top:95.5px;width:1px;height:249.44px;background:#e6e6e6"></div>
<div class="t" style="left:45.4px;top:83.6px;color:#3a8a5c;font-size:10.3px">A</div>
<div class="abs" style="left:125.3px;top:81.4px;width:1px;height:14.1px;background:#dadada"></div>
<div class="abs" style="left:125.3px;top:95.5px;width:1px;height:249.44px;background:#e6e6e6"></div>
<div class="t" style="left:99px;top:83.6px;color:#707070;font-size:10.3px">B</div>
<div class="abs" style="left:171.9px;top:81.4px;width:1px;height:14.1px;background:#dadada"></div>
<div class="abs" style="left:171.9px;top:95.5px;width:1px;height:249.44px;background:#e6e6e6"></div>
<div class="t" style="left:145.6px;top:83.6px;color:#707070;font-size:10.3px">C</div>
<div class="abs" style="left:218.5px;top:81.4px;width:1px;height:14.1px;background:#dadada"></div>
<div class="abs" style="left:218.5px;top:95.5px;width:1px;height:249.44px;background:#e6e6e6"></div>
<div class="t" style="left:191.7px;top:83.6px;color:#707070;font-size:10.3px">D</div>
<div class="abs" style="left:265.1px;top:81.4px;width:1px;height:14.1px;background:#dadada"></div>
<div class="abs" style="left:265.1px;top:95.5px;width:1px;height:249.44px;background:#e6e6e6"></div>
<div class="t" style="left:238.8px;top:83.6px;color:#707070;font-size:10.3px">E</div>
<div class="abs" style="left:311.7px;top:81.4px;width:1px;height:14.1px;background:#dadada"></div>
<div class="abs" style="left:311.7px;top:95.5px;width:1px;height:249.44px;background:#e6e6e6"></div>
<div class="t" style="left:285.4px;top:83.6px;color:#707070;font-size:10.3px">F</div>
<div class="abs" style="left:358.3px;top:81.4px;width:1px;height:14.1px;background:#dadada"></div>
<div class="abs" style="left:358.3px;top:95.5px;width:1px;height:249.44px;background:#e6e6e6"></div>
<div class="t" style="left:332px;top:83.6px;color:#707070;font-size:10.3px">G</div>
<div class="abs" style="left:404.9px;top:81.4px;width:1px;height:14.1px;background:#dadada"></div>
<div class="abs" style="left:404.9px;top:95.5px;width:1px;height:249.44px;background:#e6e6e6"></div>
<div class="t" style="left:378.1px;top:83.6px;color:#707070;font-size:10.3px">H</div>
<div class="abs" style="left:451.5px;top:81.4px;width:1px;height:14.1px;background:#dadada"></div>
<div class="abs" style="left:451.5px;top:95.5px;width:1px;height:249.44px;background:#e6e6e6"></div>
<div class="t" style="left:427.2px;top:83.6px;color:#707070;font-size:10.3px">I</div>
<div class="abs" style="left:498.1px;top:81.4px;width:1px;height:14.1px;background:#dadada"></div>
<div class="abs" style="left:498.1px;top:95.5px;width:1px;height:249.44px;background:#e6e6e6"></div>
<div class="t" style="left:472.8px;top:83.6px;color:#707070;font-size:10.3px">J</div>
<div class="abs" style="left:544.7px;top:81.4px;width:1px;height:14.1px;background:#dadada"></div>
<div class="abs" style="left:544.7px;top:95.5px;width:1px;height:249.44px;background:#e6e6e6"></div>
<div class="t" style="left:517.9px;top:83.6px;color:#707070;font-size:10.3px">K</div>
<div class="abs" style="left:591.3px;top:81.4px;width:1px;height:14.1px;background:#dadada"></div>
<div class="abs" style="left:591.3px;top:95.5px;width:1px;height:249.44px;background:#e6e6e6"></div>
<div class="t" style="left:565.5px;top:83.6px;color:#707070;font-size:10.3px">L</div>
<div class="abs" style="left:637.9px;top:81.4px;width:1px;height:14.1px;background:#dadada"></div>
<div class="abs" style="left:637.9px;top:95.5px;width:1px;height:249.44px;background:#e6e6e6"></div>
<div class="t" style="left:610.6px;top:83.6px;color:#707070;font-size:10.3px">M</div>
<div class="abs" style="left:684.5px;top:81.4px;width:1px;height:14.1px;background:#dadada"></div>
<div class="abs" style="left:684.5px;top:95.5px;width:1px;height:249.44px;background:#e6e6e6"></div>
<div class="t" style="left:657.7px;top:83.6px;color:#707070;font-size:10.3px">N</div>
<div class="abs" style="left:731.1px;top:81.4px;width:1px;height:14.1px;background:#dadada"></div>
<div class="abs" style="left:731.1px;top:95.5px;width:1px;height:249.44px;background:#e6e6e6"></div>
<div class="t" style="left:704.3px;top:83.6px;color:#707070;font-size:10.3px">O</div>
<div class="abs" style="left:18.1px;top:81.4px;width:1px;height:263.54px;background:#d2d2d2"></div>
<div class="abs" style="left:0px;top:95.1px;width:700px;height:1.2px;background:#d4d4d4"></div>
<div class="abs" style="left:18.6px;top:110.49px;width:681.4px;height:1px;background:#e6e6e6"></div>
<div class="abs" style="left:0px;top:110.49px;width:18.6px;height:1px;background:#e2e2e2"></div>
<div class="t" style="left:6.7px;top:99.1px;color:#3a8a5c;font-size:10px">1</div>
<div class="abs" style="left:18.6px;top:126.08px;width:681.4px;height:1px;background:#e6e6e6"></div>
<div class="abs" style="left:0px;top:126.08px;width:18.6px;height:1px;background:#e2e2e2"></div>
<div class="t" style="left:7.2px;top:114.69px;color:#707070;font-size:10px">2</div>
<div class="abs" style="left:18.6px;top:141.67px;width:681.4px;height:1px;background:#e6e6e6"></div>
<div class="abs" style="left:0px;top:141.67px;width:18.6px;height:1px;background:#e2e2e2"></div>
<div class="t" style="left:7.2px;top:130.28px;color:#707070;font-size:10px">3</div>
<div class="abs" style="left:18.6px;top:157.26px;width:681.4px;height:1px;background:#e6e6e6"></div>
<div class="abs" style="left:0px;top:157.26px;width:18.6px;height:1px;background:#e2e2e2"></div>
<div class="t" style="left:7.2px;top:145.87px;color:#707070;font-size:10px">4</div>
<div class="abs" style="left:18.6px;top:172.85px;width:681.4px;height:1px;background:#e6e6e6"></div>
<div class="abs" style="left:0px;top:172.85px;width:18.6px;height:1px;background:#e2e2e2"></div>
<div class="t" style="left:6.7px;top:161.46px;color:#707070;font-size:10px">5</div>
<div class="abs" style="left:18.6px;top:188.44px;width:681.4px;height:1px;background:#e6e6e6"></div>
<div class="abs" style="left:0px;top:188.44px;width:18.6px;height:1px;background:#e2e2e2"></div>
<div class="t" style="left:7.2px;top:177.05px;color:#707070;font-size:10px">6</div>
<div class="abs" style="left:18.6px;top:204.03px;width:681.4px;height:1px;background:#e6e6e6"></div>
<div class="abs" style="left:0px;top:204.03px;width:18.6px;height:1px;background:#e2e2e2"></div>
<div class="t" style="left:6.7px;top:192.64px;color:#707070;font-size:10px">7</div>
<div class="abs" style="left:18.6px;top:219.62px;width:681.4px;height:1px;background:#e6e6e6"></div>
<div class="abs" style="left:0px;top:219.62px;width:18.6px;height:1px;background:#e2e2e2"></div>
<div class="t" style="left:7.2px;top:208.23px;color:#707070;font-size:10px">8</div>
<div class="abs" style="left:18.6px;top:235.21px;width:681.4px;height:1px;background:#e6e6e6"></div>
<div class="abs" style="left:0px;top:235.21px;width:18.6px;height:1px;background:#e2e2e2"></div>
<div class="t" style="left:7.2px;top:223.82px;color:#707070;font-size:10px">9</div>
<div class="abs" style="left:18.6px;top:250.8px;width:681.4px;height:1px;background:#e6e6e6"></div>
<div class="abs" style="left:0px;top:250.8px;width:18.6px;height:1px;background:#e2e2e2"></div>
<div class="t" style="left:3.7px;top:239.41px;color:#707070;font-size:10px">10</div>
<div class="abs" style="left:18.6px;top:266.39px;width:681.4px;height:1px;background:#e6e6e6"></div>
<div class="abs" style="left:0px;top:266.39px;width:18.6px;height:1px;background:#e2e2e2"></div>
<div class="t" style="left:4.2px;top:255px;color:#707070;font-size:10px">11</div>
<div class="abs" style="left:18.6px;top:281.98px;width:681.4px;height:1px;background:#e6e6e6"></div>
<div class="abs" style="left:0px;top:281.98px;width:18.6px;height:1px;background:#e2e2e2"></div>
<div class="t" style="left:3.7px;top:270.59px;color:#707070;font-size:10px">12</div>
<div class="abs" style="left:18.6px;top:297.57px;width:681.4px;height:1px;background:#e6e6e6"></div>
<div class="abs" style="left:0px;top:297.57px;width:18.6px;height:1px;background:#e2e2e2"></div>
<div class="t" style="left:3.7px;top:286.18px;color:#707070;font-size:10px">13</div>
<div class="abs" style="left:18.6px;top:313.16px;width:681.4px;height:1px;background:#e6e6e6"></div>
<div class="abs" style="left:0px;top:313.16px;width:18.6px;height:1px;background:#e2e2e2"></div>
<div class="t" style="left:3.7px;top:301.77px;color:#707070;font-size:10px">14</div>
<div class="abs" style="left:18.6px;top:328.75px;width:681.4px;height:1px;background:#e6e6e6"></div>
<div class="abs" style="left:0px;top:328.75px;width:18.6px;height:1px;background:#e2e2e2"></div>
<div class="t" style="left:3.7px;top:317.36px;color:#707070;font-size:10px">15</div>
<div class="abs" style="left:18.6px;top:344.34px;width:681.4px;height:1px;background:#e6e6e6"></div>
<div class="abs" style="left:0px;top:344.34px;width:18.6px;height:1px;background:#e2e2e2"></div>
<div class="t" style="left:3.7px;top:332.95px;color:#707070;font-size:10px">16</div>
<div class="t" style="left:21.14px;top:97.1px;color:#4a4a4a;font-size:9px;-webkit-text-stroke-width:0.1px;transform:scaleX(1.0588)">日付</div>
<div class="t" style="left:82.8px;top:97.1px;color:#4a4a4a;font-size:9px;-webkit-text-stroke-width:0.1px">商品</div>
<div class="t" style="left:129.4px;top:97.1px;color:#4a4a4a;font-size:9px;-webkit-text-stroke-width:0.1px;transform:scaleX(1.0588)">売上</div>
<div class="t" style="left:36.25px;top:113.99px;color:#454545;font-size:10px;transform:scaleX(1.0500)">2022/3/6</div>
<div class="t" style="left:81.69px;top:112.69px;color:#4a4a4a;font-size:9px;-webkit-text-stroke-width:0.1px;transform:scaleX(1.1059)">にんじん</div>
<div class="t" style="left:148.4px;top:113.99px;color:#454545;font-size:10px">1300</div>
<div class="t" style="left:36.25px;top:129.58px;color:#454545;font-size:10px;transform:scaleX(1.0500)">2022/3/7</div>
<div class="t" style="left:81.69px;top:128.28px;color:#4a4a4a;font-size:9px;-webkit-text-stroke-width:0.1px;transform:scaleX(1.1059)">たまねぎ</div>
<div class="t" style="left:148.4px;top:129.58px;color:#454545;font-size:10px">2100</div>
<div class="t" style="left:36.25px;top:145.17px;color:#454545;font-size:10px;transform:scaleX(1.0500)">2022/3/8</div>
<div class="t" style="left:80.52px;top:143.87px;color:#4a4a4a;font-size:9px;-webkit-text-stroke-width:0.1px;transform:scaleX(1.1394)">ピーマン</div>
<div class="t" style="left:154.4px;top:145.17px;color:#454545;font-size:10px">300</div>
<div class="t" style="left:36.25px;top:160.76px;color:#454545;font-size:10px;transform:scaleX(1.0500)">2022/3/9</div>
<div class="t" style="left:81.69px;top:159.46px;color:#4a4a4a;font-size:9px;-webkit-text-stroke-width:0.1px;transform:scaleX(1.1059)">だいこん</div>
<div class="t" style="left:142.4px;top:160.76px;color:#454545;font-size:10px">10000</div>
<div class="abs" style="left:18.4px;top:95.6px;width:62px;height:16.69px;border:2px solid #2b7b4f;box-sizing:border-box"></div>
<div class="abs" style="left:78px;top:110.09px;width:4.5px;height:4.5px;background:#2b7b4f;border:1px solid #fff;box-sizing:border-box"></div>
<div class="abs" style="left:0px;top:344.94px;width:700px;height:18.06px;background:#f3f3f3"></div>
<div class="abs" style="left:0px;top:344.94px;width:11px;height:18.06px;background:#eaeaea"></div>
<div class="abs" style="left:0px;top:345.14px;width:700px;height:1.4px;background:#d6d6d6"></div>
<svg class="abs" style="left:18.3px;top:352.4px" width="3.4" height="4.2" viewBox="0 0 3.4 4.2"><path d="M3.4 0 L0 2.1 L3.4 4.2 Z" fill="#c8c8c8"/></svg>
<svg class="abs" style="left:37.5px;top:352.4px" width="3.4" height="4.2" viewBox="0 0 3.4 4.2"><path d="M0 0 L3.4 2.1 L0 4.2 Z" fill="#c8c8c8"/></svg>
<div class="abs" style="left:66.6px;top:346.54px;width:54px;height:15.26px;background:#fff;border-left:1px solid #c8c8c8;border-right:1px solid #e0e0e0;box-sizing:border-box"></div>
<div class="abs" style="left:66.6px;top:360.2px;width:54px;height:1.6px;background:#2b7b4f"></div>
<div class="t" style="left:76.2px;top:348.3px;color:#358a5a;font-size:9px;-webkit-text-stroke-width:0.1px;transform:scaleX(0.9568)">3月売上1</div>
<div class="t" style="left:130.1px;top:348.3px;color:#464646;font-size:9px;-webkit-text-stroke-width:0.1px;transform:scaleX(0.9622)">3月売上2</div>
<div class="t" style="left:184.1px;top:348.3px;color:#464646;font-size:9px;-webkit-text-stroke-width:0.1px;transform:scaleX(0.9622)">3月売上3</div>
<div class="t" style="left:238.1px;top:348.3px;color:#464646;font-size:9px;-webkit-text-stroke-width:0.1px;transform:scaleX(0.9622)">3月売上4</div>
<div class="abs" style="left:174.1px;top:346.44px;width:1px;height:16.06px;background:#cdcdcd"></div>
<div class="abs" style="left:228.1px;top:346.44px;width:1px;height:16.06px;background:#cdcdcd"></div>
<div class="abs" style="left:282.1px;top:346.44px;width:1px;height:16.06px;background:#cdcdcd"></div>
<svg class="abs" style="left:304.3px;top:348.6px" width="11.4" height="11.4" viewBox="0 0 11.4 11.4"><circle cx="5.7" cy="5.7" r="5" fill="none" stroke="#6a6a6a" stroke-width="1"/><path d="M5.7 2.8 V8.6 M2.8 5.7 H8.6" stroke="#555" stroke-width="1"/></svg>
<div class="abs" style="left:320.2px;top:346.14px;width:379.8px;height:16.86px;background:#e6e6e6"></div>
<div class="t" style="left:5.2px;top:366.6px;color:#333;font-size:8.5px;-webkit-text-stroke-width:0.3px;transform:scaleX(0.8943)">準備完了</div>
<svg class="abs" style="left:50.1px;top:366.3px" width="9.6" height="8.6" viewBox="0 0 9.6 8.6"><rect x="0.6" y="0.6" width="8.4" height="7.3" rx="0.5" fill="#c4c4c4" stroke="#4f4f4f" stroke-width="1.2"/><rect x="0.6" y="0.6" width="8.4" height="1.8" fill="#4f4f4f"/><circle cx="6.4" cy="5.6" r="2.1" fill="#e8e8e8" stroke="#4f4f4f" stroke-width="0.9"/><circle cx="6.4" cy="5.6" r="0.9" fill="#222"/><path d="M1.6 6.6 H3.4" stroke="#f4f4f4" stroke-width="0.9"/></svg>
<svg class="abs" style="left:71.8px;top:365.6px" width="10" height="10" viewBox="0 0 10 10"><circle cx="4.0" cy="1.2" r="1.1" fill="#4a4a4a"/><path d="M0.7 3.0 Q4 3.9 7.3 2.8 M1.9 3.4 L2.5 6.2 L2.0 9.4 M5.7 3.4 L5.2 5.6" fill="none" stroke="#4a4a4a" stroke-width="1.2"/><path d="M4.3 7.3 L5.7 8.9 L9.4 5.0" fill="none" stroke="#4a4a4a" stroke-width="1.2"/></svg>
<div class="t" style="left:81.8px;top:366.6px;color:#333;font-size:8.5px;-webkit-text-stroke-width:0.3px;transform:scaleX(0.7029)">アクセシビリティ:&nbsp;問題ありません</div>
</div>
</div>
<div class="fb"></div>
</div>
</body></html>
